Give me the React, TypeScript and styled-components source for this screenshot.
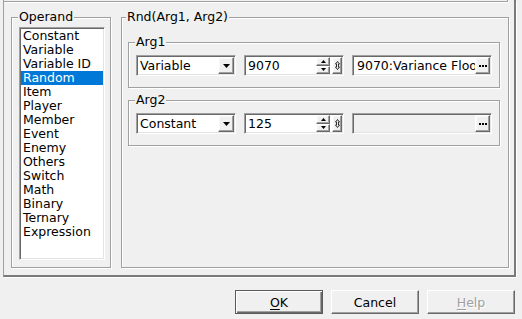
import React from 'react';
import styled, { createGlobalStyle, css } from 'styled-components';

const Global = createGlobalStyle`
  html, body { margin: 0; padding: 0; background: #f0f0f0; }
  body {
    font-family: "DejaVu Sans", Verdana, sans-serif;
    font-size: 12.5px;
    color: #000;
  }
  * { box-sizing: border-box; }
`;

const sunken = css`
  border: 1px solid;
  border-color: #a0a0a0 #ffffff #ffffff #a0a0a0;
  box-shadow: inset 1px 1px 0 #696969, inset -1px -1px 0 #e3e3e3;
  padding: 1px;
`;

const raised = css`
  border: 1px solid;
  border-color: #ffffff #696969 #696969 #ffffff;
  box-shadow: inset -1px -1px 0 #a0a0a0, inset 1px 1px 0 #f8f8f8;
  background: #f0f0f0;
`;

const Window = styled.div`
  width: 522px;
  height: 319px;
  background: #f0f0f0;
  overflow: hidden;
  display: flex;
  flex-direction: column;
`;

const Panel = styled.div`
  margin-left: 3px;
  width: 513px;
  height: 277px;
  border-left: 1px solid #a0a0a0;
  border-right: 2px solid #7a7a7a;
  border-bottom: 2px solid #7a7a7a;
  box-shadow: 1px 1px 0 #ffffff;
  display: flex;
  flex-direction: column;
`;

const TopStrip = styled.div`
  width: 504px;
  height: 2px;
  border-bottom: 1px solid #a0a0a0;
  border-right: 1px solid #a0a0a0;
  box-shadow: 1px 1px 0 #ffffff;
`;

const Row = styled.div`
  display: flex;
  gap: 10px;
  padding: 15px 0 0 7px;
`;

const Group = styled.div<{ $w: number; $h: number }>`
  position: relative;
  width: ${(p) => p.$w}px;
  height: ${(p) => p.$h}px;
  border: 1px solid #a0a0a0;
  box-shadow: inset 1px 1px 0 #ffffff, 1px 1px 0 #ffffff;
`;

const Caption = styled.span<{ $left: number }>`
  position: absolute;
  top: -8px;
  left: ${(p) => p.$left}px;
  padding: 0 1px;
  line-height: 14px;
  background: #f0f0f0;
  white-space: nowrap;
`;

const OperandGroup = styled(Group)`
  padding: 9px 0 0 7px;
`;

const ListBox = styled.div`
  ${sunken};
  width: 86px;
  height: 233px;
  background: #ffffff;
  display: flex;
  flex-direction: column;
`;

const ListItem = styled.div<{ $selected?: boolean }>`
  height: 14px;
  line-height: 14px;
  padding-left: 2px;
  white-space: nowrap;
  background: ${(p) => (p.$selected ? '#0078d7' : 'transparent')};
  color: ${(p) => (p.$selected ? '#ffffff' : '#000000')};
`;

const RndGroup = styled(Group)`
  padding: 24px 0 0 6px;
  display: flex;
  flex-direction: column;
  gap: 12px;
`;

const ArgGroup = styled(Group)`
  padding: 12px 0 0 7px;
  display: flex;
  gap: 8px;
`;

const Combo = styled.div`
  ${sunken};
  width: 100px;
  height: 21px;
  background: #ffffff;
  display: flex;
  align-items: center;
`;

const FieldText = styled.span`
  flex: 1;
  min-width: 0;
  padding-left: 2px;
  line-height: 17px;
  white-space: nowrap;
  overflow: hidden;
`;

const SmallButton = styled.div<{ $w: number }>`
  ${raised};
  width: ${(p) => p.$w}px;
  height: 17px;
  flex: none;
  display: flex;
  align-items: center;
  justify-content: center;
`;

const SpinEdit = styled.div`
  ${sunken};
  width: 100px;
  height: 21px;
  background: #ffffff;
  display: flex;
  align-items: center;
  gap: 2px;
`;

const SpinColumn = styled.div`
  width: 14px;
  height: 17px;
  display: flex;
  flex-direction: column;
  flex: none;
`;

const SpinHalf = styled.div`
  ${raised};
  flex: 1;
  display: flex;
  align-items: center;
  justify-content: center;
`;

const RefField = styled.div<{ $disabled?: boolean }>`
  ${sunken};
  width: 140px;
  height: 21px;
  background: ${(p) => (p.$disabled ? '#f0f0f0' : '#ffffff')};
  display: flex;
  align-items: center;
`;

const RefText = styled(FieldText)`
  padding-left: 3px;
`;

const ButtonRow = styled.div`
  display: flex;
  justify-content: flex-end;
  gap: 8px;
  padding-right: 7px;
  margin-top: 13px;
`;

const ActionButton = styled.button<{ $default?: boolean }>`
  width: 88px;
  height: 24px;
  padding: 0;
  margin: 0;
  font: inherit;
  background: #f0f0f0;
  color: ${(p) => (p.disabled ? '#a0a0a0' : '#000000')};
  text-shadow: ${(p) => (p.disabled ? '1px 1px 0 #ffffff' : 'none')};
  ${(p) =>
    p.$default
      ? css`
          border: 1px solid #5a5a5a;
          box-shadow: inset 1px 1px 0 #ffffff, inset -1px -1px 0 #696969,
            inset -2px -2px 0 #a0a0a0;
        `
      : css`
          border: 1px solid;
          border-color: #ffffff #696969 #696969 #ffffff;
          box-shadow: inset -1px -1px 0 #a0a0a0;
        `}
  u { text-underline-offset: 2px; }
`;

const DownTri = () => (
  <svg width="7" height="4" viewBox="0 0 7 4">
    <polygon points="0,0 7,0 3.5,4" fill="#000" />
  </svg>
);

const SpinTri = ({ up }: { up?: boolean }) => (
  <svg width="5" height="3" viewBox="0 0 5 3">
    <polygon points={up ? '0,3 5,3 2.5,0' : '0,0 5,0 2.5,3'} fill="#000" />
  </svg>
);

const UpDownGlyph = () => (
  <svg width="5" height="9" viewBox="0 0 5 9">
    <polygon
      points="2.5,0.5 4.5,3 3.5,3 3.5,6 4.5,6 2.5,8.5 0.5,6 1.5,6 1.5,3 0.5,3"
      fill="none"
      stroke="#000"
      strokeWidth="0.8"
    />
  </svg>
);

const Dots = () => (
  <svg width="8" height="2" viewBox="0 0 8 2">
    <rect x="0" y="0" width="2" height="2" fill="#000" />
    <rect x="3" y="0" width="2" height="2" fill="#000" />
    <rect x="6" y="0" width="2" height="2" fill="#000" />
  </svg>
);

const operands = [
  'Constant',
  'Variable',
  'Variable ID',
  'Random',
  'Item',
  'Player',
  'Member',
  'Event',
  'Enemy',
  'Others',
  'Switch',
  'Math',
  'Binary',
  'Ternary',
  'Expression',
];

type ArgProps = {
  title: string;
  kind: string;
  value: string;
  refText?: string;
};

const ArgBox = ({ title, kind, value, refText }: ArgProps) => (
  <ArgGroup $w={372} $h={46}>
    <Caption $left={6}>{title}</Caption>
    <Combo>
      <FieldText>{kind}</FieldText>
      <SmallButton $w={16}>
        <DownTri />
      </SmallButton>
    </Combo>
    <SpinEdit>
      <FieldText>{value}</FieldText>
      <SpinColumn>
        <SpinHalf>
          <SpinTri up />
        </SpinHalf>
        <SpinHalf>
          <SpinTri />
        </SpinHalf>
      </SpinColumn>
      <SmallButton $w={10}>
        <UpDownGlyph />
      </SmallButton>
    </SpinEdit>
    <RefField $disabled={!refText}>
      <RefText>{refText ?? ''}</RefText>
      <SmallButton $w={15}>
        <Dots />
      </SmallButton>
    </RefField>
  </ArgGroup>
);

export default function App() {
  return (
    <>
      <Global />
      <Window>
        <Panel>
          <TopStrip />
          <Row>
            <OperandGroup $w={100} $h={251}>
              <Caption $left={6}>Operand</Caption>
              <ListBox>
                {operands.map((o) => (
                  <ListItem key={o} $selected={o === 'Random'}>
                    {o}
                  </ListItem>
                ))}
              </ListBox>
            </OperandGroup>
            <RndGroup $w={388} $h={251}>
              <Caption $left={4}>Rnd(Arg1, Arg2)</Caption>
              <ArgBox title="Arg1" kind="Variable" value="9070" refText="9070:Variance Floor" />
              <ArgBox title="Arg2" kind="Constant" value="125" />
            </RndGroup>
          </Row>
        </Panel>
        <ButtonRow>
          <ActionButton $default>
            <u>O</u>K
          </ActionButton>
          <ActionButton>Cancel</ActionButton>
          <ActionButton disabled>
            <u>H</u>elp
          </ActionButton>
        </ButtonRow>
      </Window>
    </>
  );
}
